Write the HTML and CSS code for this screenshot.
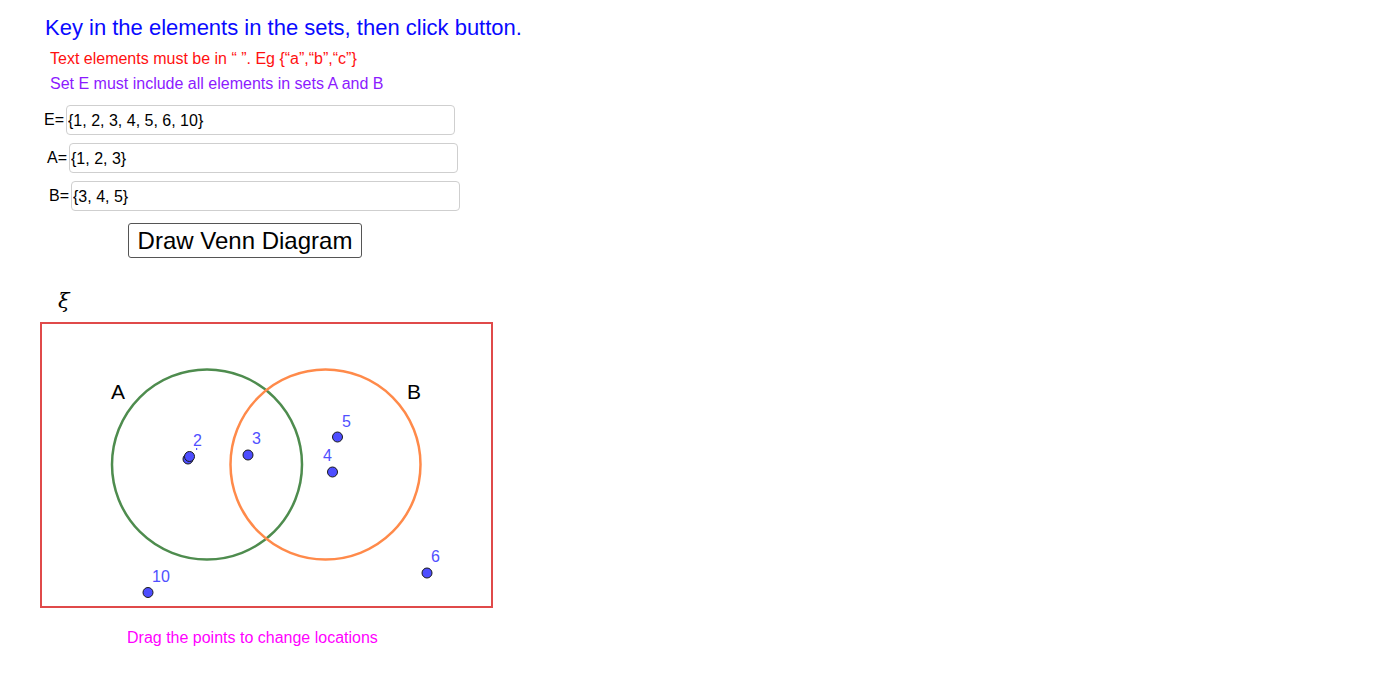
FILE: index.html
```html
<!DOCTYPE html>
<html lang="en">
<head>
    <meta charset="UTF-8">
    <meta name="viewport" content="width=device-width, initial-scale=1.0">
    <title>Venn Diagram</title>
    <link rel="stylesheet" href="styles.css">
</head>
<body>
    <div class="applet">
        <h1 class="title">Key in the elements in the sets, then click button.</h1>
        <p class="note note-red">Text elements must be in “ ”. Eg {“a”,“b”,“c”}</p>
        <p class="note note-purple">Set E must include all elements in sets A and B</p>

        <div class="set-row row-e">
            <label class="set-label">E=</label>
            <input class="set-input" type="text" value="{1, 2, 3, 4, 5, 6, 10}">
        </div>
        <div class="set-row row-a">
            <label class="set-label">A=</label>
            <input class="set-input" type="text" value="{1, 2, 3}">
        </div>
        <div class="set-row row-b">
            <label class="set-label">B=</label>
            <input class="set-input" type="text" value="{3, 4, 5}">
        </div>

        <button class="draw-btn">Draw Venn Diagram</button>

        <svg class="venn" width="500" height="330" viewBox="0 285 500 330">
            <text class="xi" x="58" y="308">ξ</text>
            <rect x="41" y="323" width="451" height="284" fill="none" stroke="#e04a4a" stroke-width="2"/>
            <circle cx="207" cy="464.5" r="95" fill="none" stroke="#4e8c4e" stroke-width="2.5"/>
            <circle cx="325.5" cy="464.5" r="95" fill="none" stroke="#ff8a4a" stroke-width="2.5"/>
            <text class="set-name" x="111" y="399">A</text>
            <text class="set-name" x="407" y="399">B</text>

            <circle class="pt" cx="188" cy="459" r="5"/>
            <circle class="pt" cx="189.5" cy="456.5" r="5"/>
            <circle class="pt" cx="248" cy="455" r="5"/>
            <circle class="pt" cx="337.5" cy="437" r="5"/>
            <circle class="pt" cx="332.5" cy="472" r="5"/>
            <circle class="pt" cx="427" cy="573" r="5"/>
            <circle class="pt" cx="148" cy="592.5" r="5"/>

            <text class="pt-label" x="193" y="446">2</text>
            <rect x="196" y="448" width="1.2" height="2" fill="#5050ff"/>
            <text class="pt-label" x="252" y="444">3</text>
            <text class="pt-label" x="342" y="427">5</text>
            <text class="pt-label" x="323" y="461">4</text>
            <text class="pt-label" x="431" y="562">6</text>
            <text class="pt-label" x="152" y="582">10</text>
        </svg>

        <p class="hint">Drag the points to change locations</p>
    </div>
</body>
</html>
```
FILE: styles.css
```css
body {
    margin: 0;
    background-color: #ffffff;
    font-family: 'Liberation Sans', Arial, sans-serif;
}
.applet {
    width: 1389px;
    height: 688px;
    padding-top: 16px;
    box-sizing: border-box;
    overflow: hidden;
}
.title {
    margin: 0 0 10px 45px;
    font-size: 22px;
    line-height: 24px;
    font-weight: normal;
    color: #0a0aff;
}
.note {
    margin: 0 0 7px 50px;
    font-size: 16px;
    line-height: 18px;
}
.note-red {
    color: #ff1010;
}
.note-purple {
    color: #8c1aff;
    margin-bottom: 12px;
}
.set-row {
    display: flex;
    align-items: center;
    gap: 2px;
    margin-bottom: 8px;
}
.row-e {
    margin-left: 44px;
}
.row-a {
    margin-left: 47px;
}
.row-b {
    margin-left: 49px;
    margin-bottom: 12px;
}
.set-label {
    font-size: 16px;
    color: #000;
}
.set-input {
    width: 389px;
    height: 30px;
    box-sizing: border-box;
    margin: 0;
    padding: 1px 1px 0;
    border: 1px solid #cfcfcf;
    border-radius: 4px;
    font-family: 'Liberation Sans', Arial, sans-serif;
    font-size: 16px;
    color: #000;
    background: #fff;
}
.draw-btn {
    display: block;
    margin: 0 0 27px 128px;
    width: 234px;
    height: 35px;
    padding: 0;
    border: 1px solid #555;
    border-radius: 3px;
    background: #fff;
    font-family: 'Liberation Sans', Arial, sans-serif;
    font-size: 24px;
    color: #000;
}
.venn {
    display: block;
}
.xi {
    font-family: 'DejaVu Serif', 'Liberation Serif', serif;
    font-style: italic;
    font-size: 21px;
    fill: #000;
}
.set-name {
    font-family: 'Liberation Sans', Arial, sans-serif;
    font-size: 21px;
    fill: #000;
}
.pt {
    fill: #4d4dff;
    stroke: #1a1a1a;
    stroke-width: 1;
}
.pt-label {
    font-family: 'Liberation Sans', Arial, sans-serif;
    font-size: 16px;
    fill: #5050ff;
}
.hint {
    margin: 14px 0 0 127px;
    font-size: 16px;
    line-height: 18px;
    color: #ff00ff;
}
```
